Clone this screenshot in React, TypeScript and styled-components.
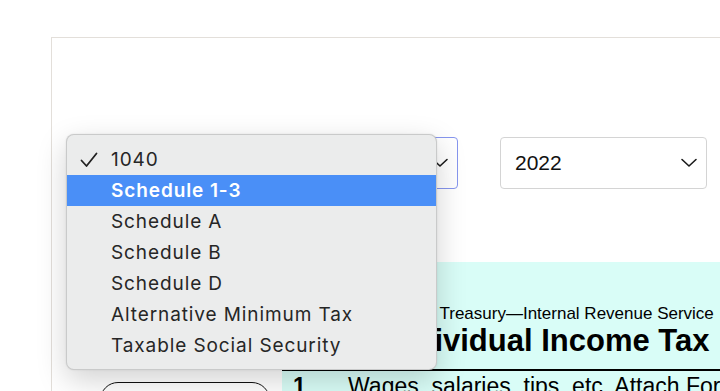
import React from "react";
import styled, { createGlobalStyle } from "styled-components";

const GlobalStyle = createGlobalStyle`
  html, body {
    margin: 0;
    padding: 0;
    background: #ffffff;
    overflow: hidden;
  }
  body {
    font-family: "Liberation Sans", Arial, sans-serif;
    color: #000;
  }
`;

const Page = styled.div`
  position: relative;
  height: 391px;
  overflow: hidden;
  padding: 37px 0 0 51px;
  box-sizing: border-box;
`;

const Panel = styled.div`
  border-top: 1px solid #e3dfda;
  border-left: 1px solid #e3dfda;
  height: 600px;
  padding: 99px 0 0 15px;
  box-sizing: border-box;
`;

const Controls = styled.div`
  display: flex;
  gap: 42px;
`;

const SelectBox = styled.div<{ $width: number; $focused?: boolean }>`
  width: ${(p) => p.$width}px;
  height: 52px;
  box-sizing: border-box;
  border: 1px solid ${(p) => (p.$focused ? "#8796ee" : "#d4d4d4")};
  border-radius: 4px;
  background: #fff;
  display: flex;
  align-items: center;
  justify-content: space-between;
  padding: 0 8px 0 14px;
  font-size: 21px;
  color: #111;
`;

const Chevron = () => (
  <svg width="18" height="10" viewBox="0 0 18 10" fill="none">
    <path d="M2 1.5 L9 8 L16 1.5" stroke="#1a1a1a" strokeWidth="1.6" strokeLinecap="round" strokeLinejoin="round" />
  </svg>
);

const Body = styled.div`
  display: flex;
  margin-top: 73px;
`;

const SideColumn = styled.div`
  width: 215px;
  flex: none;
  padding: 120px 0 0 33px;
  box-sizing: border-box;
`;

const OutlineButton = styled.button`
  width: 170px;
  height: 40px;
  border: 1.5px solid #111;
  border-radius: 18px;
  background: #fff;
`;

const FormSheet = styled.div`
  flex: 1;
  background: #d9fdf7;
  padding-top: 43px;
  min-height: 300px;
  white-space: nowrap;
  overflow: hidden;
`;

const FormHeader = styled.div`
  padding: 0 0 11px 17px;
  border-bottom: 2px solid #000;
`;

const Agency = styled.div`
  font-size: 17px;
  line-height: 18px;
`;

const FormTitle = styled.div`
  font-size: 31px;
  line-height: 35px;
  font-weight: 700;
  padding-left: 20px;
`;

const LineRow = styled.div`
  display: flex;
  padding: 2px 0 0 11px;
  font-size: 23px;
  line-height: 26px;
`;

const LineNumber = styled.span`
  width: 55px;
  flex: none;
  font-weight: 700;
`;

const Menu = styled.div`
  position: absolute;
  left: 66px;
  top: 134px;
  width: 371px;
  height: 236px;
  box-sizing: border-box;
  padding: 9px 0 0;
  border-radius: 8px;
  background: #ebecec;
  border: 0.5px solid rgba(0, 0, 0, 0.14);
  box-shadow: 0 10px 30px rgba(0, 0, 0, 0.18), 0 0 2px rgba(0, 0, 0, 0.1);
  font-family: Inter, "Noto Sans", sans-serif;
  overflow: hidden;
`;

const MenuItem = styled.div<{ $active?: boolean }>`
  position: relative;
  height: 31px;
  display: flex;
  align-items: center;
  padding-left: 44px;
  font-size: 19px;
  letter-spacing: 0.9px;
  color: ${(p) => (p.$active ? "#ffffff" : "#262626")};
  background: ${(p) => (p.$active ? "#4a8ff7" : "transparent")};
  font-weight: ${(p) => (p.$active ? 600 : 400)};
`;

const Check = styled.svg`
  position: absolute;
  left: 13px;
  top: 8px;
`;

const options = [
  "1040",
  "Schedule 1-3",
  "Schedule A",
  "Schedule B",
  "Schedule D",
  "Alternative Minimum Tax",
  "Taxable Social Security",
];

export default function App() {
  return (
    <>
      <GlobalStyle />
      <Page>
        <Panel>
          <Controls>
            <SelectBox $width={391} $focused>
              <span>1040</span>
              <Chevron />
            </SelectBox>
            <SelectBox $width={207}>
              <span>2022</span>
              <Chevron />
            </SelectBox>
          </Controls>
          <Body>
            <SideColumn>
              <OutlineButton />
            </SideColumn>
            <FormSheet>
              <FormHeader>
                <Agency>Department of the Treasury—Internal Revenue Service</Agency>
                <FormTitle>U.S. Individual Income Tax</FormTitle>
              </FormHeader>
              <LineRow>
                <LineNumber>1</LineNumber>
                <span>Wages, salaries, tips, etc. Attach Form(s) W-2</span>
              </LineRow>
            </FormSheet>
          </Body>
        </Panel>
        <Menu>
          {options.map((o, i) => (
            <MenuItem key={o} $active={i === 1}>
              {i === 0 && (
                <Check width="18" height="16" viewBox="0 0 18 16" fill="none">
                  <path d="M1.5 8.5 L6.5 14 L16.5 1.5" stroke="#222" strokeWidth="1.8" strokeLinecap="round" strokeLinejoin="round" />
                </Check>
              )}
              {o}
            </MenuItem>
          ))}
        </Menu>
      </Page>
    </>
  );
}
